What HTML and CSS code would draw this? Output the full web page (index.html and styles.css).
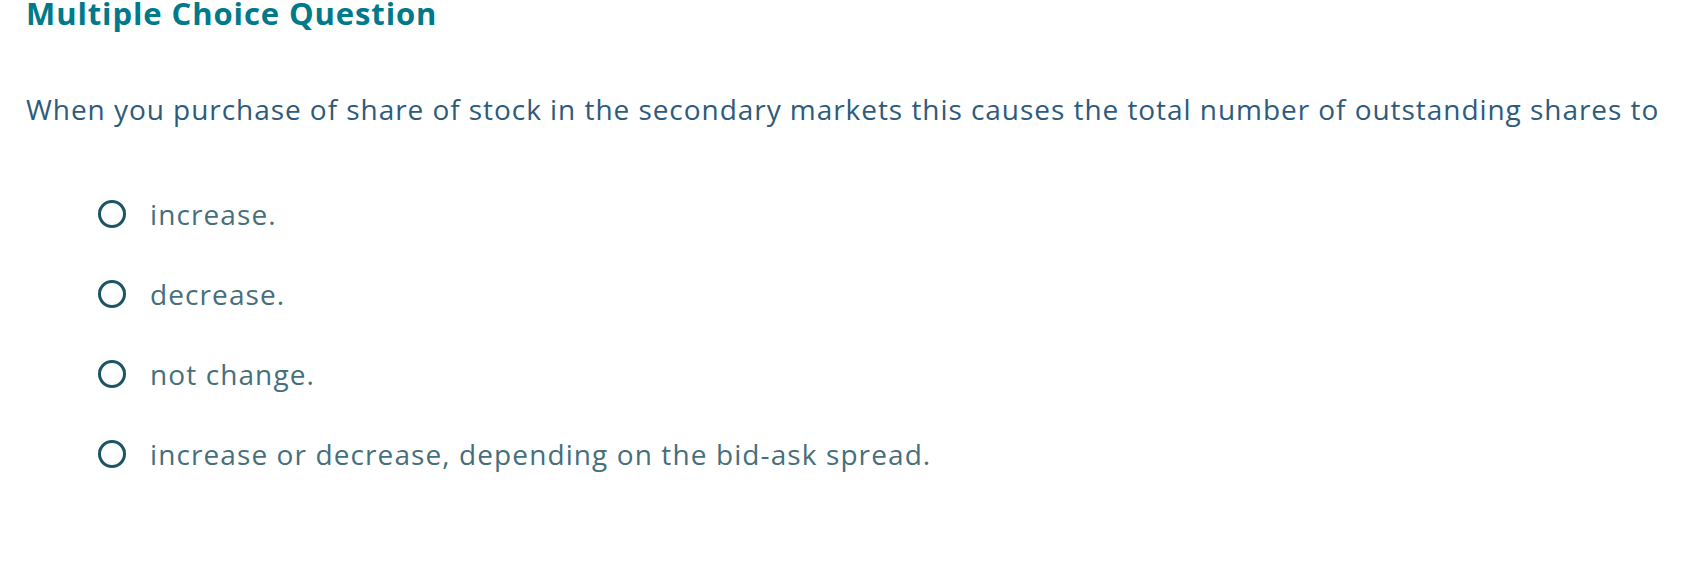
FILE: index.html
```html
<!DOCTYPE html>
<html>
<head>
<meta charset="utf-8">
<link rel="stylesheet" href="styles.css">
</head>
<body>
<div class="question">
  <h2 class="title">Multiple Choice Question</h2>
  <p class="prompt">When you purchase of share of stock in the secondary markets this causes the total number of outstanding shares to</p>
  <ul class="choices">
    <li class="choice"><span class="radio"></span><span class="label">increase.</span></li>
    <li class="choice"><span class="radio"></span><span class="label">decrease.</span></li>
    <li class="choice"><span class="radio"></span><span class="label">not change.</span></li>
    <li class="choice"><span class="radio"></span><span class="label">increase or decrease, depending on the bid-ask spread.</span></li>
  </ul>
</div>
</body>
</html>
```
FILE: styles.css
```css
html, body {
  margin: 0;
  padding: 0;
  background: #ffffff;
}
body {
  font-family: "Open Sans", "Liberation Sans", sans-serif;
  overflow: hidden;
}
.question {
  padding: 0 0 0 26px;
  margin-top: -7px;
}
.title {
  margin: 0;
  font-size: 31px;
  line-height: 40px;
  font-weight: 700;
  letter-spacing: 0.9px;
  color: #00798a;
}
.prompt {
  margin: 56px 0 0 0;
  font-size: 28px;
  line-height: 40px;
  letter-spacing: 0.95px;
  color: #2e5b7b;
  white-space: nowrap;
}
.choices {
  list-style: none;
  margin: 65px 0 0 0;
  padding: 0 0 0 72px;
  display: flex;
  flex-direction: column;
  gap: 40px;
}
.choice {
  display: flex;
  align-items: center;
  gap: 24px;
  height: 40px;
}
.radio {
  width: 28px;
  height: 28px;
  box-sizing: border-box;
  border: 3.5px solid #1e5464;
  border-radius: 50%;
  flex: none;
}
.label {
  font-size: 28px;
  letter-spacing: 1.1px;
  color: #456f7c;
}
```
